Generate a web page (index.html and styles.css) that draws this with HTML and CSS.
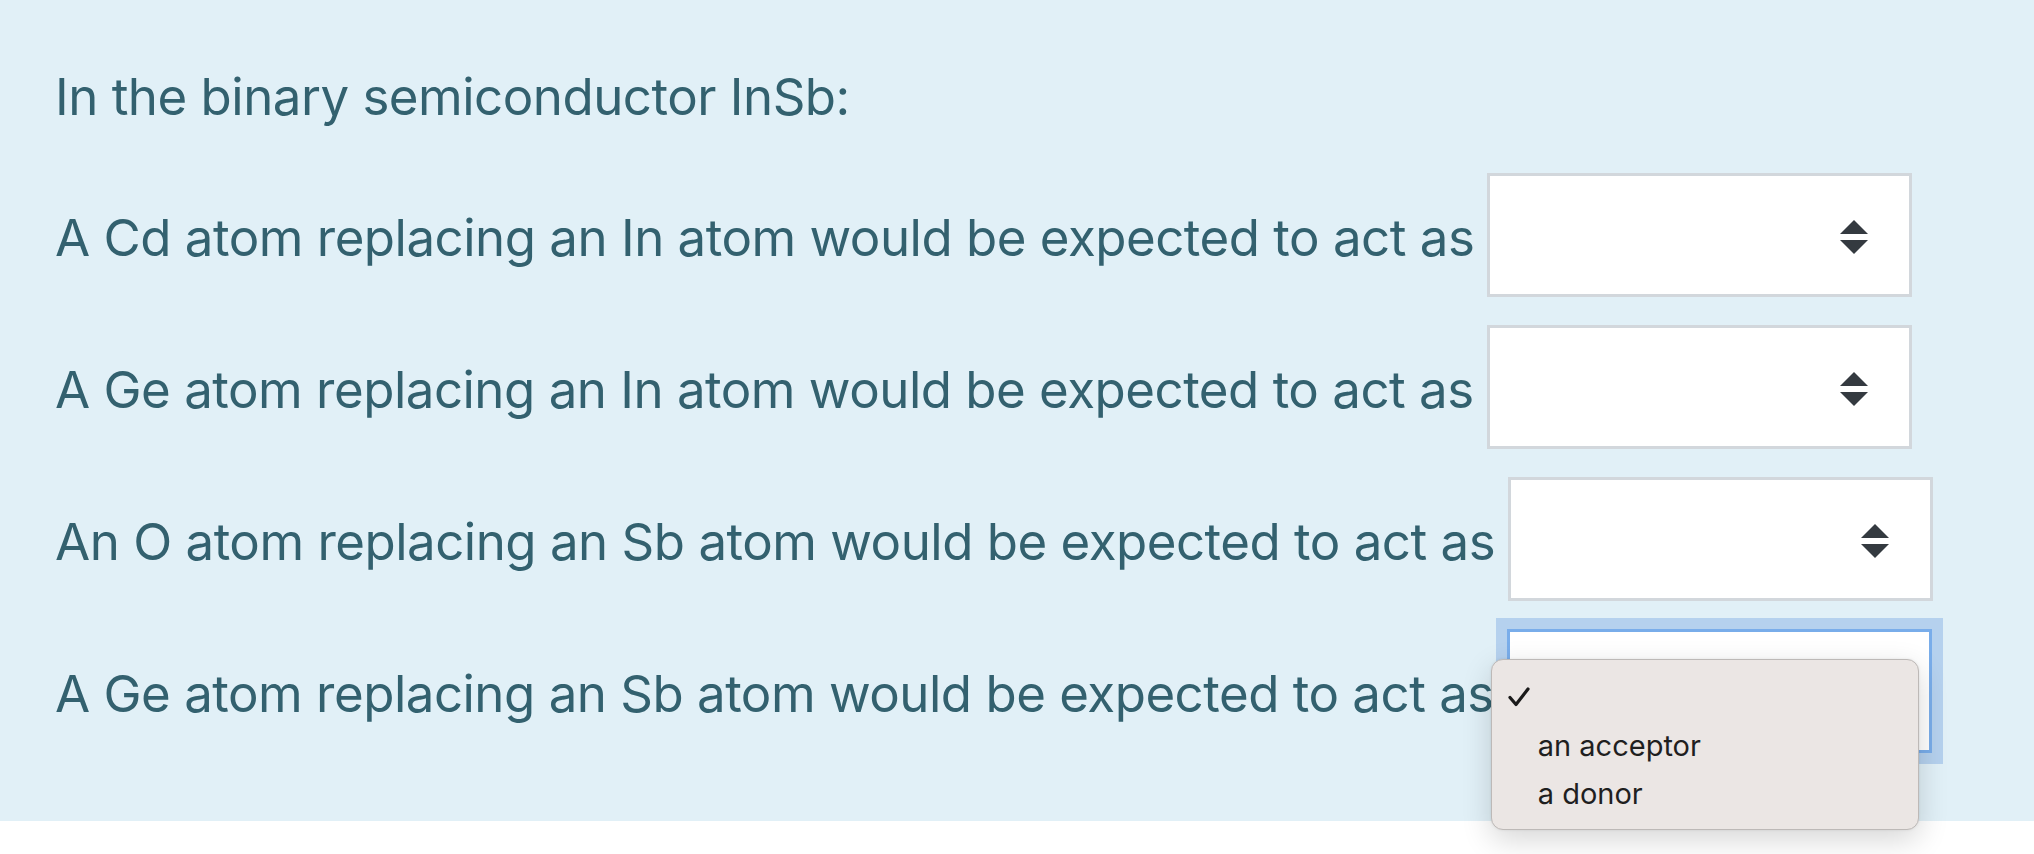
FILE: index.html
```html
<!DOCTYPE html>
<html lang="en">
<head>
<meta charset="utf-8">
<title>InSb question</title>
<link rel="stylesheet" href="styles.css">
</head>
<body>
<div class="formulation">
  <p class="qtext">In the binary semiconductor InSb:</p>
  <div class="row">
    <span class="label">A Cd atom replacing an In atom would be expected to act as</span>
    <div class="select"><span class="arrows"><i class="up"></i><i class="down"></i></span></div>
  </div>
  <div class="row">
    <span class="label">A Ge atom replacing an In atom would be expected to act as</span>
    <div class="select"><span class="arrows"><i class="up"></i><i class="down"></i></span></div>
  </div>
  <div class="row">
    <span class="label">An O atom replacing an Sb atom would be expected to act as</span>
    <div class="select"><span class="arrows"><i class="up"></i><i class="down"></i></span></div>
  </div>
  <div class="row">
    <span class="label">A Ge atom replacing an Sb atom would be expected to act as</span>
    <div class="select focused">
      <span class="arrows"><i class="up"></i><i class="down"></i></span>
      <ul class="menu">
        <li class="opt checked"><svg class="check" width="22" height="20" viewBox="0 0 22 20"><path d="M2 10.5 L8 17.5 L20 2" fill="none" stroke="#1a1a1a" stroke-width="3.2" stroke-linecap="round" stroke-linejoin="round"/></svg></li>
        <li class="opt">an acceptor</li>
        <li class="opt">a donor</li>
      </ul>
    </div>
  </div>
</div>
</body>
</html>
```

FILE: styles.css
```css
html, body {
  margin: 0;
  padding: 0;
  background: #ffffff;
}

body {
  font-family: Inter, "Noto Sans", sans-serif;
  width: 2034px;
  height: 854px;
  overflow: hidden;
}

.formulation {
  background: #e1f0f7;
  color: #33616f;
  height: 821px;
  box-sizing: border-box;
  padding: 66px 0 0 55px;
  font-size: 51px;
  line-height: 1.21;
  letter-spacing: -0.5px;
}

.qtext {
  margin: 0 0 45px 0;
}

.row {
  display: flex;
  align-items: center;
  height: 124px;
  margin-bottom: 28px;
  gap: 13px;
}

.label {
  white-space: nowrap;
  padding-top: 6px;
}

.select {
  position: relative;
  width: 425px;
  height: 124px;
  box-sizing: border-box;
  background: #ffffff;
  border: 3px solid #d2d7dc;
  flex: none;
}

.arrows {
  position: absolute;
  right: 41px;
  top: 44px;
  display: flex;
  flex-direction: column;
  gap: 6px;
}

.arrows i {
  display: block;
  width: 0;
  height: 0;
  border-left: 14px solid transparent;
  border-right: 14px solid transparent;
}

.arrows .up {
  border-bottom: 14px solid #343a40;
}

.arrows .down {
  border-top: 14px solid #343a40;
}

.select.focused {
  border-color: #79adea;
  box-shadow: 0 0 0 11px #b5d1ee;
}

.menu {
  position: absolute;
  left: -19px;
  top: 27px;
  width: 428px;
  height: 171px;
  box-sizing: border-box;
  margin: 0;
  padding: 14px 0 0 0;
  list-style: none;
  background: #ebe6e4;
  border: 1px solid #bdb9b7;
  border-radius: 12px;
  box-shadow: 0 10px 30px rgba(0, 0, 0, 0.16), 0 0 3px rgba(0, 0, 0, 0.08);
  font-family: Inter, "Noto Sans", sans-serif;
  font-size: 29px;
  line-height: 48px;
  letter-spacing: 0;
  color: #1f1f1f;
  z-index: 5;
}

.opt {
  height: 48px;
  padding-left: 46px;
  white-space: nowrap;
}

.opt.checked {
  position: relative;
}

.check {
  position: absolute;
  left: 16px;
  top: 13px;
}
```
